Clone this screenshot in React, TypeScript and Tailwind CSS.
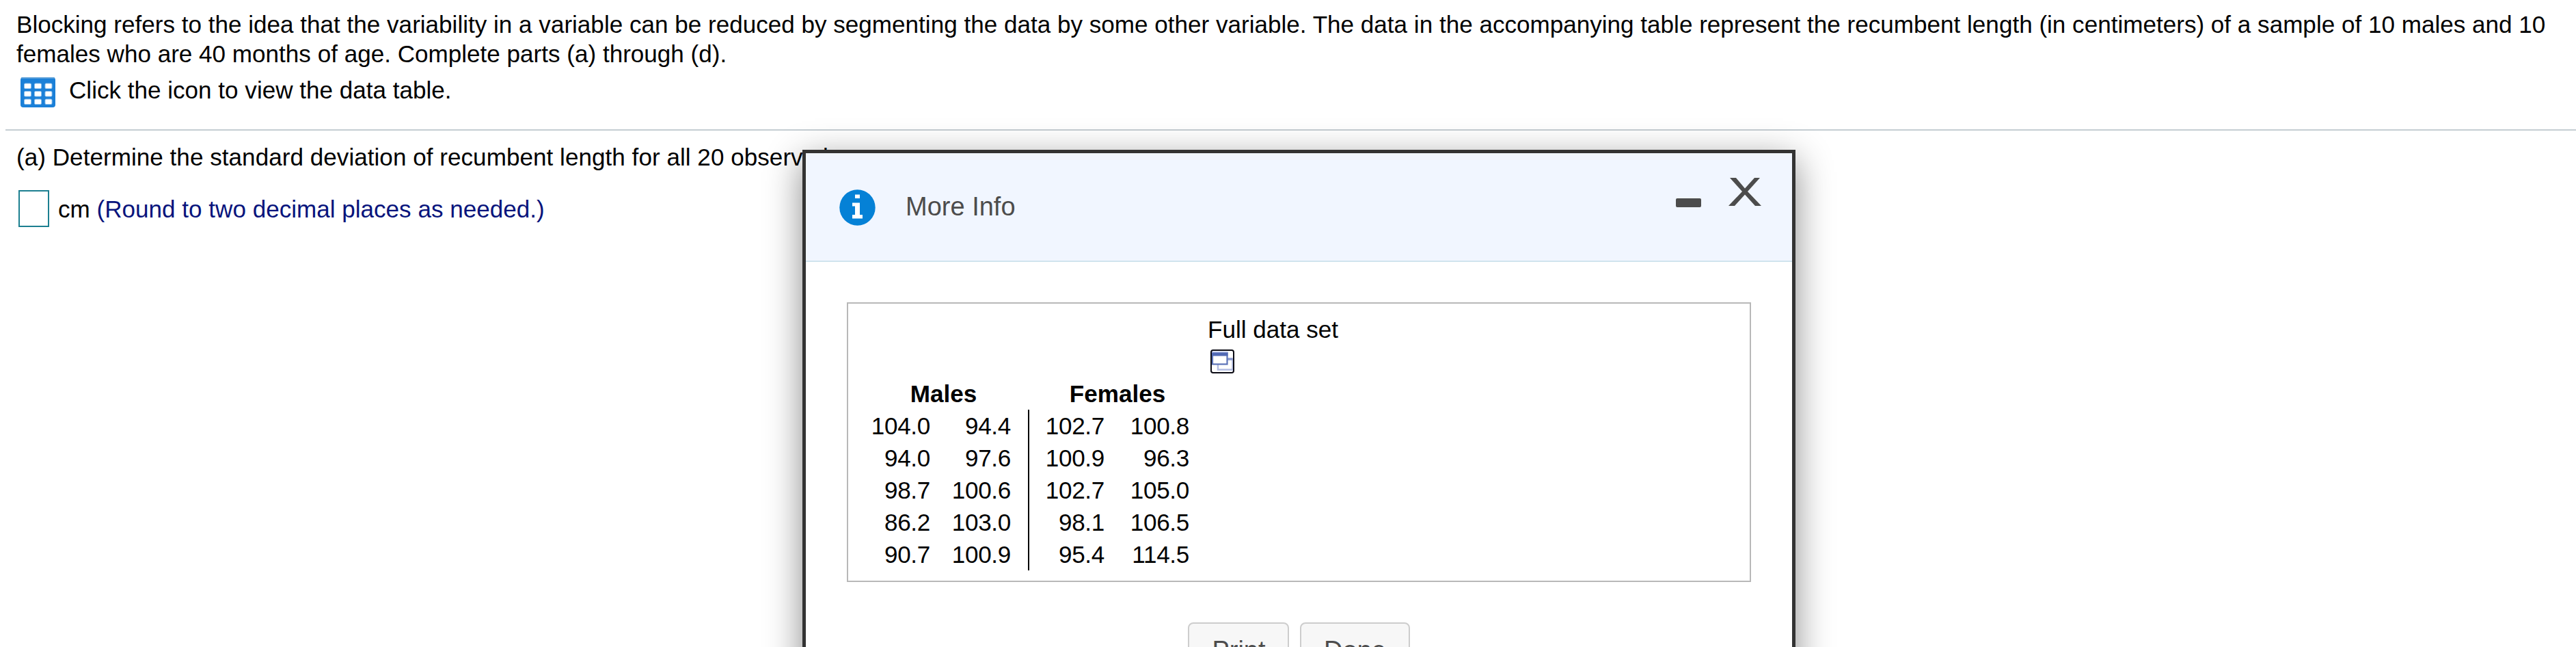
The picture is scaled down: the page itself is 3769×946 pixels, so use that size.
const males = [
  ['104.0', '94.4'],
  ['94.0', '97.6'],
  ['98.7', '100.6'],
  ['86.2', '103.0'],
  ['90.7', '100.9'],
];

const females = [
  ['102.7', '100.8'],
  ['100.9', '96.3'],
  ['102.7', '105.0'],
  ['98.1', '106.5'],
  ['95.4', '114.5'],
];

function TableIcon() {
  return (
    <svg className="w-[51px] h-11 shrink-0" viewBox="0 0 51 44">
      <rect width="51" height="44" rx="4" fill="#1b80d8" />
      <rect x="1" width="49" height="2" rx="1" fill="#5a9fd8" />
      {[9, 20.5, 32].map((y) =>
        [5.5, 20.5, 36].map((x) => (
          <rect key={`${x}-${y}`} x={x} y={y} width="10" height="7.5" rx="1.5" fill="#fff" stroke="#8fc0ec" strokeWidth="1" />
        ))
      )}
    </svg>
  );
}

function InfoIcon() {
  return (
    <svg className="w-[53px] h-[53px] shrink-0" viewBox="0 0 53 53">
      <circle cx="26.5" cy="26.5" r="26.2" fill="#0581d6" />
      <path d="M23 7.5h7v5.5h-7zM19 19.5h11V37h4v5.5H19V37h4V24.500h-4z" fill="#fff" />
    </svg>
  );
}

function PopoutIcon() {
  return (
    <svg className="block w-[35px] h-[35px]" viewBox="0 0 35 35">
      <path d="M11 21v8.500h21.500V14H25" fill="none" stroke="#b4bde2" strokeWidth="2.500" />
      <path d="M25 14h7.500" stroke="#8c9bd0" strokeWidth="3.500" />
      <rect x="3" y="5" width="21.500" height="16.500" fill="#fff" stroke="#5c74b8" strokeWidth="2.200" />
      <path d="M2 4.500h23.500v5H2z" fill="#5068b4" />
      <path d="M2 4h23.500" stroke="#9aa8dc" strokeWidth="1.500" />
      <rect x="1" y="1" width="33" height="33" rx="3" fill="none" stroke="#0b0b14" strokeWidth="2" />
    </svg>
  );
}

function DataTable() {
  return (
    <table className="ml-[17px] w-[507px] table-fixed border-separate border-spacing-0 leading-[47px]">
      <colgroup>
        <col className="w-[116px]" />
        <col className="w-[132px]" />
        <col className="w-[125px]" />
        <col className="w-[134px]" />
      </colgroup>
      <thead>
        <tr>
          <th colSpan={2} className="p-0 pr-[3px] text-center font-bold">Males</th>
          <th colSpan={2} className="p-0 pr-px text-center font-bold">Females</th>
        </tr>
      </thead>
      <tbody className="text-right tracking-[-0.3px]">
        {males.map((row, i) => (
          <tr key={i}>
            <td className="p-0 pr-[13px]">{row[0]}</td>
            <td className="p-0 pr-[25px] border-r-2 border-black">{row[1]}</td>
            <td className="p-0 pr-[15px]">{females[i][0]}</td>
            <td className="p-0 pr-[25px]">{females[i][1]}</td>
          </tr>
        ))}
      </tbody>
    </table>
  );
}

function MoreInfoDialog() {
  return (
    <div className="absolute left-[1174px] top-[219px] w-[1453px] h-[900px] border-[5px] border-[#333] bg-white shadow-[0_15px_50px_rgba(0,0,0,0.46)]">
      <header className="flex h-[159px] items-start border-b-2 border-[#d0e4ee] bg-[#f1f6ff] pl-[49px] pr-[45px] pt-9">
        <div className="flex grow items-start gap-[44px] pt-[17px] text-[38px] leading-[50px] text-[#4c4c4c]">
          <InfoIcon />
          <span>More Info</span>
        </div>
        <button className="mt-[30px] mr-10">
          <div className="w-[37px] h-[13px] rounded-[2px] bg-[#4c4c4c]" />
        </button>
        <button>
          <svg className="block w-12 h-[41px]" viewBox="0 0 48 41">
            <path d="M2 0h9l13 15.500L38 0h8L28 20l20 21h-9L24 24.500 9 41H0l20-21z" fill="#4c4c4c" />
          </svg>
        </button>
      </header>

      <div className="mx-[60px] mt-[59px] h-[409px] border-2 border-[#b8b8b8] pt-[17px]">
        <div className="pl-[526px]">
          <p className="leading-[41px]">Full data set</p>
          <div className="ml-1 mt-[9px] mb-1.5">
            <PopoutIcon />
          </div>
        </div>
        <DataTable />
      </div>

      <div className="mt-[59px] flex gap-4 pl-[559px] text-[38px] leading-[44px] text-[#4c4c4c]">
        <button className="w-[148px] rounded-lg border-2 border-[#cdcdcd] bg-[#f7f7f7] py-[17px] pl-px">Print</button>
        <button className="w-[161px] rounded-lg border-2 border-[#cdcdcd] bg-[#f7f7f7] py-[17px]">Done</button>
      </div>
    </div>
  );
}

export default function App() {
  return (
    <div className="relative h-[946px] w-[3769px] overflow-hidden bg-white pt-3.5 font-['Liberation_Sans',Arial,sans-serif] text-[35.08px] text-black">
      <p className="pl-6 leading-[43px] whitespace-nowrap">
        Blocking refers to the idea that the variability in a variable can be reduced by segmenting the data by some other
        variable. The data in the accompanying table represent the recumbent length (in centimeters) of a sample of 10 males and 10
        <br />
        females who are 40 months of age. Complete parts (a) through (d).
      </p>
      <div className="mt-[13px] flex h-11 items-start gap-5 pl-[30px] leading-[38px]">
        <TableIcon />
        <span>Click the icon to view the data table.</span>
      </div>
      <div className="ml-2 mt-8 h-0.5 bg-[#c5cdd2]" />
      <p className="mt-[18px] pl-6 leading-[42px] whitespace-nowrap tracking-[0.03px]">
        (a) Determine the standard deviation of recumbent length for all 20 observations.
      </p>
      <div className="mt-[27px] flex h-[54px] items-start pl-[27px] leading-[56px]">
        <input className="mr-[13px] h-[54px] w-[45px] border-2 border-[#1c7f90] outline-none" />
        <span>
          cm <span className="text-[#08147c]">(Round to two decimal places as needed.)</span>
        </span>
      </div>

      <MoreInfoDialog />
    </div>
  );
}
